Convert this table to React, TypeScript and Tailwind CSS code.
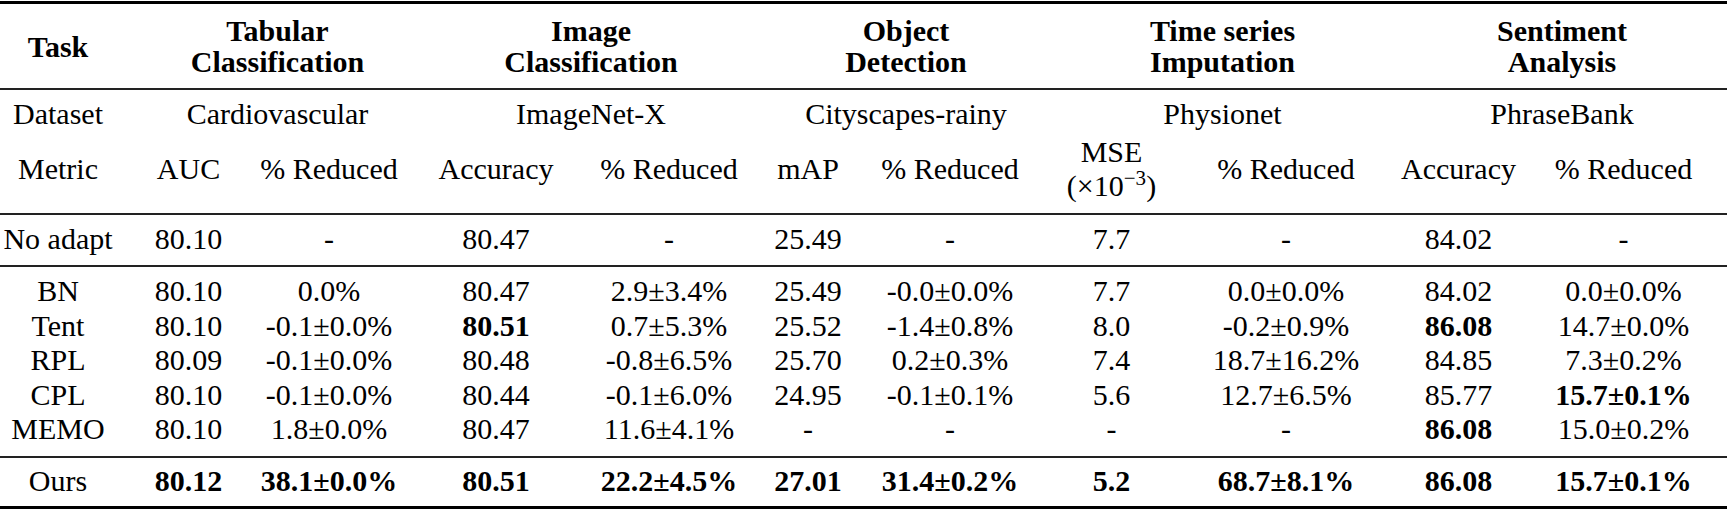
type Cell = { v: string; b?: boolean };

const colWidths = [
  "w-[137px]",
  "w-[103px]",
  "w-[178px]",
  "w-[156px]",
  "w-[190px]",
  "w-[88px]",
  "w-[196px]",
  "w-[127px]",
  "w-[222px]",
  "w-[123px]",
  "w-[207px]",
];

const groups = [
  ["Tabular", "Classification", "Cardiovascular"],
  ["Image", "Classification", "ImageNet-X"],
  ["Object", "Detection", "Cityscapes-rainy"],
  ["Time series", "Imputation", "Physionet"],
  ["Sentiment", "Analysis", "PhraseBank"],
];

const metrics = ["AUC", "% Reduced", "Accuracy", "% Reduced", "mAP", "% Reduced", "MSE", "% Reduced", "Accuracy", "% Reduced"];

// "*" prefix marks a bold entry
function parse(row: string[]): Cell[] {
  return row.map((s) => (s.startsWith("*") ? { v: s.slice(1), b: true } : { v: s }));
}

const noAdapt = parse(["80.10", "-", "80.47", "-", "25.49", "-", "7.7", "-", "84.02", "-"]);

const body: [string, Cell[]][] = [
  ["BN", parse(["80.10", "0.0%", "80.47", "2.9±3.4%", "25.49", "-0.0±0.0%", "7.7", "0.0±0.0%", "84.02", "0.0±0.0%"])],
  ["Tent", parse(["80.10", "-0.1±0.0%", "*80.51", "0.7±5.3%", "25.52", "-1.4±0.8%", "8.0", "-0.2±0.9%", "*86.08", "14.7±0.0%"])],
  ["RPL", parse(["80.09", "-0.1±0.0%", "80.48", "-0.8±6.5%", "25.70", "0.2±0.3%", "7.4", "18.7±16.2%", "84.85", "7.3±0.2%"])],
  ["CPL", parse(["80.10", "-0.1±0.0%", "80.44", "-0.1±6.0%", "24.95", "-0.1±0.1%", "5.6", "12.7±6.5%", "85.77", "*15.7±0.1%"])],
  ["MEMO", parse(["80.10", "1.8±0.0%", "80.47", "11.6±4.1%", "-", "-", "-", "-", "*86.08", "15.0±0.2%"])],
];

const ours = parse(["*80.12", "*38.1±0.0%", "*80.51", "*22.2±4.5%", "*27.01", "*31.4±0.2%", "*5.2", "*68.7±8.1%", "*86.08", "*15.7±0.1%"]);

function Row({ label, cells, pad }: { label: string; cells: Cell[]; pad: string }) {
  return (
    <>
      <td className={`${pad} pr-[21px] text-center`}>{label}</td>
      {cells.map((c, i) => (
        <td key={i} className={`${pad} text-center whitespace-nowrap ${c.b ? "font-bold" : ""}`}>
          {c.v}
        </td>
      ))}
    </>
  );
}

export default function App() {
  return (
    <div className="bg-white pt-px w-[1732px] h-[509px] overflow-hidden">
      <table className="table-fixed border-collapse w-[1727px] font-['Liberation_Serif','Times_New_Roman',serif] text-[30px] leading-[34.5px] text-black">
        <colgroup>
          {colWidths.map((w, i) => (
            <col key={i} className={w} />
          ))}
        </colgroup>
        <tbody>
          <tr className="border-t-[3px] border-b-2 border-t-black border-b-[#222]">
            <td className="py-[11px] pr-[21px] text-center font-bold leading-[31px]">Task</td>
            {groups.map((g) => (
              <td key={g[2]} colSpan={2} className="py-[11px] text-center font-bold leading-[31px]">
                <div>{g[0]}</div>
                <div>{g[1]}</div>
              </td>
            ))}
          </tr>
          <tr>
            <td className="pt-[7px] pb-[3px] pr-[21px] text-center">Dataset</td>
            {groups.map((g) => (
              <td key={g[2]} colSpan={2} className="pt-[7px] pb-[3px] text-center">
                {g[2]}
              </td>
            ))}
          </tr>
          <tr className="border-b-2 border-b-[#222]">
            <td className="pt-0 pb-[9px] pr-[21px] text-center align-middle">Metric</td>
            {metrics.map((m, i) =>
              m === "MSE" ? (
                <td key={i} className="pt-0 pb-[9px] text-center align-middle whitespace-nowrap">
                  <div>MSE</div>
                  <div>
                    (×10<sup className="text-[21px] leading-none relative top-[-11px] align-baseline">−3</sup>)
                  </div>
                </td>
              ) : (
                <td key={i} className="pt-0 pb-[9px] text-center align-middle whitespace-nowrap">
                  {m}
                </td>
              )
            )}
          </tr>
          <tr className="border-b-2 border-b-[#222]">
            <Row label="No adapt" cells={noAdapt} pad="pt-[7px] pb-[9px]" />
          </tr>
          {body.map(([label, cells], i) => (
            <tr key={label} className={i === body.length - 1 ? "border-b-2 border-b-[#222]" : ""}>
              <Row
                label={label}
                cells={cells}
                pad={i === 0 ? "pt-[7px] pb-0" : i === body.length - 1 ? "pt-0 pb-[9px]" : "py-0"}
              />
            </tr>
          ))}
          <tr className="border-b-[3px] border-b-black">
            <Row label="Ours" cells={ours} pad="pt-[6px] pb-[8px]" />
          </tr>
        </tbody>
      </table>
    </div>
  );
}
